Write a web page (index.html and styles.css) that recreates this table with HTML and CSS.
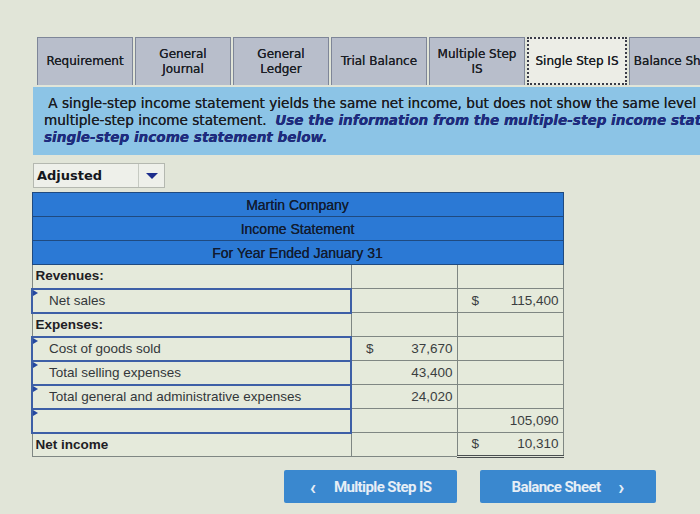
FILE: index.html
```html
<!DOCTYPE html>
<html>
<head>
<meta charset="utf-8">
<title>Single Step IS</title>
<link rel="stylesheet" href="styles.css">
</head>
<body>
<div class="page">
  <div class="tabs">
    <div class="tab">Requirement</div>
    <div class="tab">General<br>Journal</div>
    <div class="tab">General<br>Ledger</div>
    <div class="tab">Trial Balance</div>
    <div class="tab">Multiple Step<br>IS</div>
    <div class="tab active">Single Step IS</div>
    <div class="tab">Balance Sheet</div>
  </div>

  <div class="panel">
    <div class="line">&nbsp;A single-step income statement yields the same net income, but does not show the same level of detail as a</div>
    <div class="line">multiple-step income statement.&nbsp; <em>Use the information from the multiple-step income statement to complete the</em></div>
    <div class="line"><em>single-step income statement below.</em></div>
  </div>

  <div class="select">
    <span class="select-text">Adjusted</span>
    <span class="select-arrow"><span class="tri"></span></span>
  </div>

  <table class="stmt">
    <colgroup>
      <col class="c1"><col class="c2"><col class="c3">
    </colgroup>
    <tr class="hdr"><td colspan="3">Martin Company</td></tr>
    <tr class="hdr"><td colspan="3">Income Statement</td></tr>
    <tr class="hdr"><td colspan="3">For Year Ended January 31</td></tr>
    <tr><td class="lbl b">Revenues:</td><td></td><td></td></tr>
    <tr><td class="inp"><span class="flag"></span>Net sales</td><td></td><td class="amt"><span class="cur">$</span>115,400</td></tr>
    <tr><td class="lbl b">Expenses:</td><td></td><td></td></tr>
    <tr><td class="inp"><span class="flag"></span>Cost of goods sold</td><td class="amt"><span class="cur">$</span>37,670</td><td></td></tr>
    <tr><td class="inp"><span class="flag"></span>Total selling expenses</td><td class="amt">43,400</td><td></td></tr>
    <tr><td class="inp"><span class="flag"></span>Total general and administrative expenses</td><td class="amt">24,020</td><td></td></tr>
    <tr><td class="inp"><span class="flag"></span></td><td></td><td class="amt">105,090</td></tr>
    <tr><td class="lbl b">Net income</td><td></td><td class="amt total"><span class="cur">$</span>10,310</td></tr>
  </table>

  <div class="nav">
    <button class="btn"><span class="chev">&lsaquo;</span>Multiple Step IS</button>
    <button class="btn">Balance Sheet<span class="chev right">&rsaquo;</span></button>
  </div>
</div>
</body>
</html>
```
FILE: styles.css
```css
html, body {
  margin: 0;
  padding: 0;
  background: #e1e5d8;
  overflow: hidden;
}

.page {
  width: 800px;
  padding-top: 37px;
}

/* Tabs */
.tabs {
  display: flex;
  gap: 2px;
  margin-left: 37px;
}

.tab {
  box-sizing: border-box;
  width: 96px;
  height: 48px;
  display: flex;
  align-items: center;
  justify-content: center;
  text-align: center;
  background: #b8becb;
  border: 1px solid #7e8698;
  border-bottom: none;
  font-family: "DejaVu Sans", sans-serif;
  font-size: 12px;
  line-height: 15px;
  color: #1c1f26;
  text-shadow: 0 0 0.5px #1c1f26;
  white-space: nowrap;
  overflow: hidden;
}

.tab.active {
  width: 100px;
  background: #ecede6;
  border: 2px dotted #3a3c48;
}

/* Instruction panel */
.panel {
  margin-left: 33px;
  margin-top: 2px;
  height: 68px;
  box-sizing: border-box;
  padding: 8px 0 0 11px;
  background: #8cc4e6;
  font-family: "DejaVu Sans", sans-serif;
  font-size: 13.6px;
  line-height: 17px;
  color: #1b1d22;
  text-shadow: 0 0 0.3px #1b1d22;
}

.panel .line {
  white-space: nowrap;
}

.panel em {
  font-weight: bold;
  font-style: italic;
  color: #1d2b84;
}

/* Dropdown */
.select {
  margin: 8px 0 0 33px;
  width: 132px;
  height: 25px;
  box-sizing: border-box;
  display: flex;
  border: 1px solid #b4b8b0;
  background: #eef0ea;
}

.select-text {
  flex: 1;
  display: flex;
  align-items: center;
  padding-left: 3px;
  font-family: "DejaVu Sans", sans-serif;
  font-weight: bold;
  font-size: 13px;
  color: #15171c;
}

.select-arrow {
  width: 25px;
  display: flex;
  align-items: center;
  justify-content: center;
  border-left: 1px solid #c6cac2;
}

.tri {
  width: 0;
  height: 0;
  border-left: 6px solid transparent;
  border-right: 6px solid transparent;
  border-top: 6px solid #1c2d8c;
}

/* Statement table */
.stmt {
  margin: 4px 0 0 31px;
  width: 531px;
  border-collapse: collapse;
  table-layout: fixed;
  font-family: "Liberation Sans", Arial, sans-serif;
  font-size: 13.5px;
  color: #25282c;
}

.stmt col.c1 { width: 319px; }
.stmt col.c2 { width: 106px; }
.stmt col.c3 { width: 106px; }

.stmt tr {
  height: 24px;
}

.stmt td {
  padding: 0 4px;
  line-height: 16px;
  border: 1px solid #7f8783;
  background: #e5eadb;
  position: relative;
  white-space: nowrap;
  vertical-align: middle;
}

.stmt tr.hdr td {
  background: #2b79d5;
  border: 1px solid #1f4a80;
  text-align: center;
  font-size: 14px;
  color: #111c30;
  text-shadow: 0 0 0.4px #111c30;
}

.stmt td.lbl {
  padding-left: 3px;
}

.stmt td.b {
  font-weight: bold;
  color: #1e2024;
}

.stmt td.inp {
  border: 2px solid #3d5fa6;
  padding-left: 16px;
  color: #33373a;
}

.flag {
  position: absolute;
  left: 0;
  top: 0;
  width: 0;
  height: 0;
  border-top: 3px solid transparent;
  border-bottom: 3px solid transparent;
  border-left: 5px solid #2448a0;
}

.stmt td.amt {
  text-align: right;
  color: #3a3e40;
}

.cur {
  float: left;
  padding-left: 10px;
}

.stmt td.total {
  border-bottom: 3px double #4a4f50;
}

/* Bottom navigation */
.nav {
  display: flex;
  gap: 23px;
  margin: 12px 0 0 284px;
}

.btn {
  height: 33px;
  border: none;
  border-radius: 2px;
  background: #3a88cf;
  color: #e6eef6;
  font-family: "Liberation Sans Narrow", "Roboto", sans-serif;
  font-weight: bold;
  font-size: 15px;
  letter-spacing: -0.6px;
  display: flex;
  align-items: center;
  justify-content: center;
  padding: 0;
}

.btn:first-child { width: 173px; }
.btn:last-child { width: 176px; }

.chev {
  font-size: 20px;
  margin-right: 18px;
  line-height: 1;
  letter-spacing: 0;
}

.chev.right {
  margin-right: 0;
  margin-left: 18px;
}
```
